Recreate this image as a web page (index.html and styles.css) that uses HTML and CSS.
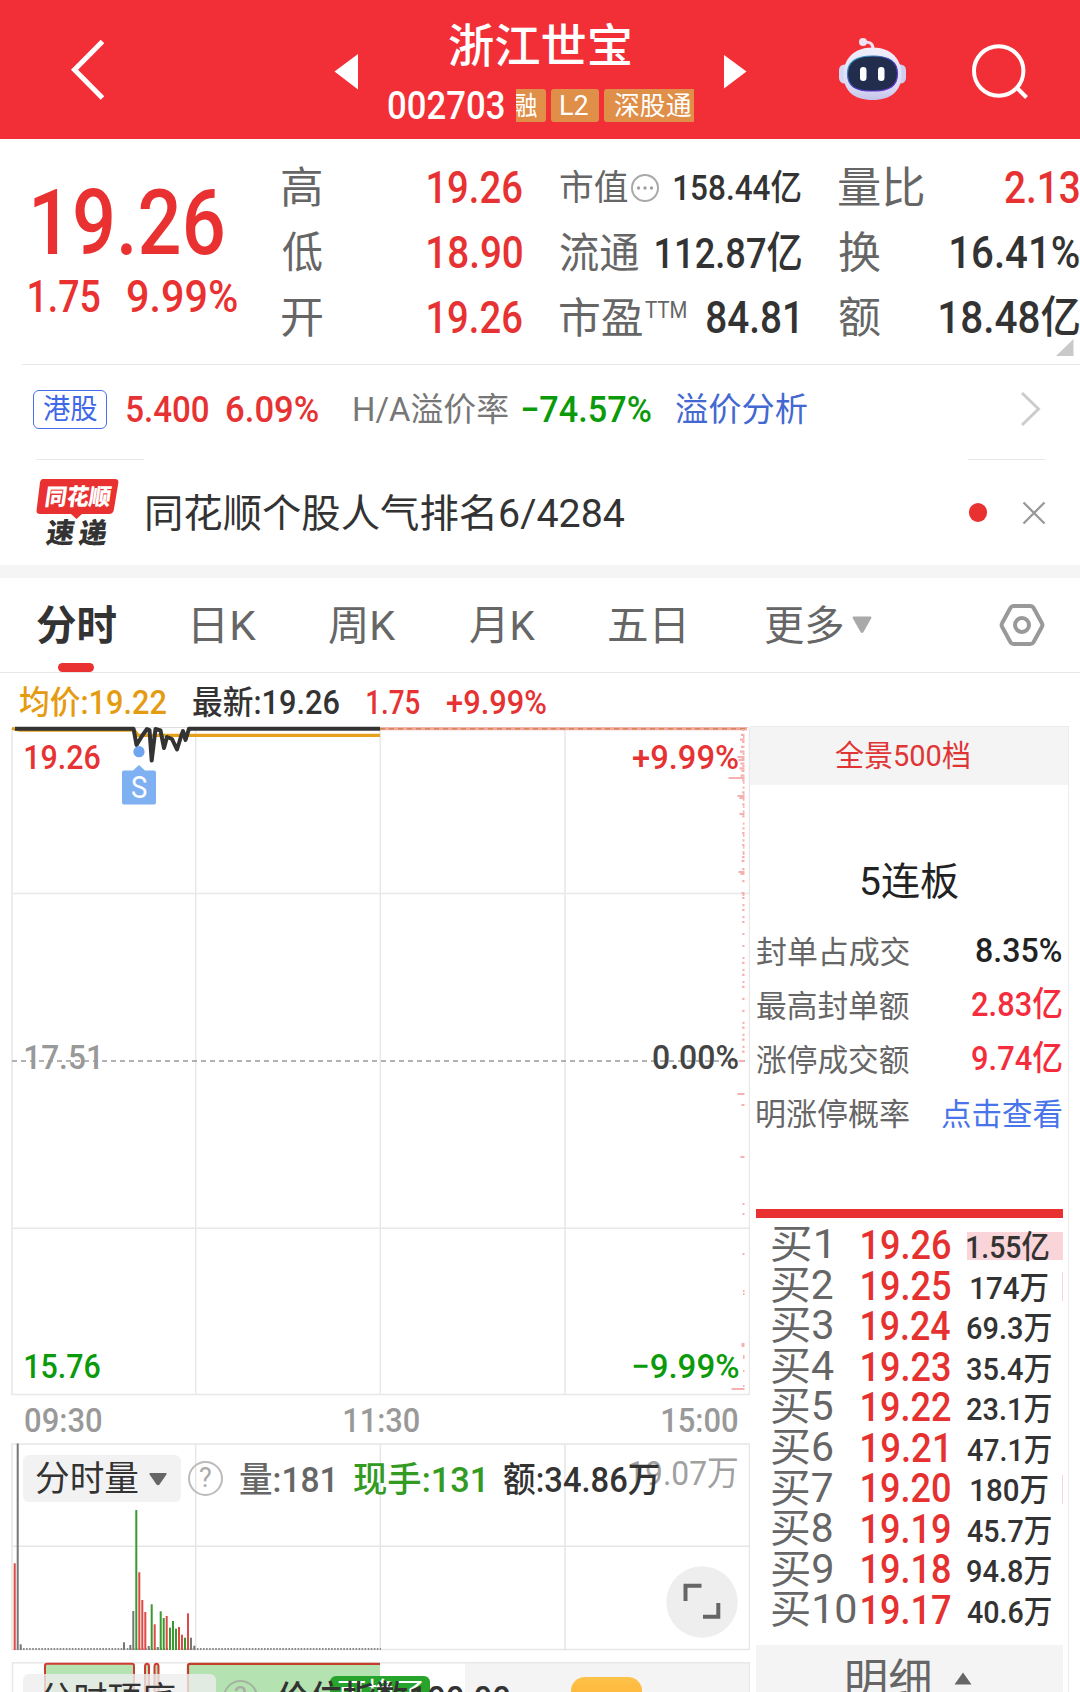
FILE: index.html
```html
<!DOCTYPE html>
<html lang="zh-CN">
<head>
<meta charset="utf-8">
<title>浙江世宝 002703</title>
<link rel="stylesheet" href="styles.css">
</head>
<body>
<header class="top">
  <svg class="top-back" viewBox="0 0 330 139"><path d="M102.500 41.500L74.500 69.700L102.500 98" fill="none" stroke="#fff" stroke-width="5"/></svg>
  <svg class="top-prev" viewBox="330 0 58 139"><path d="M334.500 71.500L358 54V89.500Z" fill="#fff"/></svg>
  <div class="top-mid">
    <div class="top-name"><span data-w="181">浙江世宝</span></div>
    <div class="top-code">
      <span class="code" data-w="115.500">002703</span>
      <i class="badge b-rong"><span>融</span></i>
      <i class="badge b-l2"><span data-w="27.500">L2</span></i>
      <i class="badge b-sgt"><span data-w="77.500">深股通</span></i>
    </div>
  </div>
  <svg class="top-next" viewBox="694 0 126 139"><path d="M746.500 71.500L724 55V88.500Z" fill="#fff"/></svg>
  <svg class="top-robot" viewBox="820 0 130 139">
    <defs>
      <linearGradient id="shell" x1="0" y1="0" x2="0" y2="1"><stop offset="0" stop-color="#f1eefb"/><stop offset=".75" stop-color="#dcdaf4"/><stop offset="1" stop-color="#c3c3ea"/></linearGradient>
      <linearGradient id="rim" x1="0" y1="0" x2="1" y2="1"><stop offset="0" stop-color="#35b7c4"/><stop offset=".5" stop-color="#3c3fc0"/><stop offset="1" stop-color="#7a35d8"/></linearGradient>
    </defs>
    <path d="M863.500 42Q873 41 873 49" fill="none" stroke="#ecdff0" stroke-width="3"/>
    <circle cx="863" cy="42" r="4" fill="#efe4f3"/>
    <rect x="839" y="64.500" width="12" height="19" rx="5.500" fill="#d6d7f5"/>
    <rect x="894" y="64.500" width="12" height="19" rx="5.500" fill="#cfcff2"/>
    <path d="M872.500 47.500C892 47.500 901.500 60 901.500 74.500C901.500 91 891 100 872.500 100C854 100 843.500 91 843.500 74.500C843.500 60 853 47.500 872.500 47.500Z" fill="url(#shell)"/>
    <path d="M872.500 56C889 56 897.500 62 897.500 73.500C897.500 86 890 91 872.500 91C855 91 847.500 86 847.500 73.500C847.500 62 856 56 872.500 56Z" fill="#222c4d" stroke="url(#rim)" stroke-width="1.200"/>
    <rect x="860" y="67" width="6.500" height="14" rx="3.200" fill="#fff"/>
    <rect x="878" y="67" width="6.500" height="14" rx="3.200" fill="#fff"/>
  </svg>
  <svg class="top-search" viewBox="950 0 130 139"><g fill="none" stroke="#fff" stroke-width="4"><circle cx="998.700" cy="71" r="24.700"/><path d="M1016 87L1026.500 97.500"/></g></svg>
</header>

<section class="quote">
  <div class="q-price">
    <div class="q-last"><span data-w="189">19.26</span></div>
    <div class="q-chg"><span data-w="71">1.75</span><span data-w="109">9.99%</span></div>
  </div>
  <div class="q-col q-a">
    <div><em data-w="39.500">高</em><b class="up" data-w="94">19.26</b></div>
    <div><em data-w="40">低</em><b class="up" data-w="94">18.90</b></div>
    <div><em data-w="40">开</em><b class="up" data-w="94">19.26</b></div>
  </div>
  <div class="q-col q-b">
    <div><em class="s35" data-w="67.500">市值</em><svg class="dots" viewBox="0 0 30 30"><circle cx="15" cy="15" r="13" fill="none" stroke="#a9a9a9" stroke-width="2"/><g fill="#a0a0a0"><circle cx="8.500" cy="15" r="1.700"/><circle cx="15" cy="15" r="1.700"/><circle cx="21.500" cy="15" r="1.700"/></g></svg><b class="s35" data-w="127">158.44亿</b></div>
    <div><em class="s41" data-w="79">流通</em><b class="s42" data-w="145">112.87亿</b></div>
    <div><em class="s41" data-w="82">市盈</em><sup data-w="41.500">TTM</sup><b class="pe" data-w="90">84.81</b></div>
  </div>
  <div class="q-col q-c">
    <div><em data-w="84.500">量比</em><b class="up" data-w="74">2.13</b></div>
    <div><em data-w="41">换</em><b data-w="128">16.41%</b></div>
    <div><em data-w="41">额</em><b data-w="139">18.48亿</b></div>
  </div>
  <svg class="q-more" viewBox="0 0 18 18"><path d="M0 17L17.500 0V17Z" fill="#c9c9c9"/></svg>
</section>

<section class="hk">
  <span class="hk-tag"><span data-w="54.500">港股</span></span>
  <b class="up hk-p" data-w="81">5.400</b>
  <b class="up hk-r" data-w="91.500">6.09%</b>
  <em class="hk-l" data-w="154">H/A溢价率</em>
  <b class="down hk-v" data-w="129">−74.57%</b>
  <em class="hk-link" data-w="131">溢价分析</em>
  <svg class="hk-go" viewBox="0 0 22 36"><path d="M2 2L18.500 18L2 34" fill="none" stroke="#ccc" stroke-width="3"/></svg>
</section>
<div class="hair"><i></i><i></i></div>

<section class="news">
  <svg class="news-logo" viewBox="0 0 84 70">
    <path d="M7 1H79Q83 1 82.300 5L77.800 32Q77 36 73 36H46L40.500 41L35 36H4Q0 36 .6 32L4 4.500Q4.600 1 7 1Z" fill="#e93131"/>
    <g transform="skewX(-8)" font-family="'Noto Sans CJK SC',sans-serif" font-weight="900"><text x="12" y="27.500" font-size="23" fill="#fff" textLength="66" lengthAdjust="spacingAndGlyphs">同花顺</text><text x="18.500" y="65" font-size="28" fill="#333" textLength="28" lengthAdjust="spacingAndGlyphs">速</text><text x="51" y="65" font-size="28" fill="#333" textLength="28" lengthAdjust="spacingAndGlyphs">递</text></g>
  </svg>
  <span class="news-t" data-w="478">同花顺个股人气排名6/4284</span>
  <i class="news-dot"></i>
  <svg class="news-x" viewBox="0 0 24 24"><path d="M1.500 1.500L22.500 22.500M22.500 1.500L1.500 22.500" stroke="#999" stroke-width="2.300"/></svg>
</section>

<nav class="tabs">
  <span class="tab on"><span data-w="79">分时</span></span>
  <span class="tab t2" data-w="62">日K</span>
  <span class="tab t3" data-w="66.500">周K</span>
  <span class="tab t4" data-w="65">月K</span>
  <span class="tab t5" data-w="75">五日</span>
  <span class="tab t6" data-w="77.500">更多</span>
  <svg class="tab-tri" viewBox="0 0 20 18"><path d="M1.500 .5H18.500Q20 .5 19.200 2.200L11.500 16Q10 18 8.500 16L.8 2.200Q0 .5 1.500 .5Z" fill="#a9a9a9"/></svg>
  <svg class="tab-set" viewBox="0 0 46 44"><path d="M14.500 3H31.500Q33.500 3 34.500 4.700L42.800 20Q44 22 42.800 24L34.500 39.300Q33.500 41 31.500 41H14.500Q12.500 41 11.500 39.300L3.200 24Q2 22 3.200 20L11.500 4.700Q12.500 3 14.500 3Z" fill="none" stroke="#999" stroke-width="4"/><circle cx="23" cy="22" r="7" fill="none" stroke="#999" stroke-width="4"/></svg>
</nav>

<div class="info">
  <span class="avg" data-w="146.500">均价:19.22</span>
  <span class="now" data-w="146.500">最新:19.26</span>
  <b class="up" data-w="53">1.75</b>
  <b class="up" data-w="99">+9.99%</b>
</div>

<main class="main">
  <div class="charts">
    <div class="price">
      <svg viewBox="0 726 750 670">
        <g fill="none" stroke="#e8e8e8" stroke-width="1.500">
          <path d="M12 728V1394.500H749.500V728"/>
          <path d="M195.700 728V1394M380.300 728V1394M565 728V1394M12 893.500H749M12 1228.300H749"/>
        </g>
        <path d="M12 727.500H749" stroke="#ddd" stroke-width="1"/>
        <path d="M12 1061H745" stroke="#999" stroke-width="1.500" stroke-dasharray="5 4"/>
        <path d="M380 728.700H747" stroke="#f6a59c" stroke-width="3"/>
        <path d="M380 728.700H747" stroke="#c98a55" stroke-width="1.500" stroke-dasharray="5 4"/>
        <path d="M12 728.500L20 730H134L138 735.300H380" fill="none" stroke="#e5a01c" stroke-width="3.300"/>
        <path id="ticks" fill="none" stroke="#f7b0b0" stroke-width="2.200"/>
        <path d="M15 728.700H133.500L136.500 745L142 736L147 729L149.500 730L151.700 760.500L155.500 729L160.500 730.500L164 748L167 737L172 739L177 749.500L181.500 735L183 731L185.500 740L189 728.700H380" fill="none" stroke="#333" stroke-width="4" stroke-linejoin="round"/>
        <circle cx="139" cy="751.700" r="5.600" fill="#6ea5ee"/>
        <path d="M124 770.500H133L139 765L145 770.500H154Q156 770.500 156 772.500V802.500Q156 804.500 154 804.500H124Q122 804.500 122 802.500V772.500Q122 770.500 124 770.500Z" fill="#7fb0f1"/>
      </svg>
      <b class="ov up o-hi" data-w="74.500">19.26</b>
      <b class="ov up o-hip" data-w="105">+9.99%</b>
      <b class="ov gray o-mid" data-w="73">17.51</b>
      <b class="ov dark o-midp" data-w="85">0.00%</b>
      <b class="ov down o-lo" data-w="74.500">15.76</b>
      <b class="ov down o-lop" data-w="105.500">−9.99%</b>
      <span class="ov o-s" data-w="15">S</span>
    </div>
    <div class="axis"><b data-w="76.500">09:30</b><b data-w="75">11:30</b><b data-w="75.500">15:00</b></div>
    <div class="vol">
      <svg viewBox="0 1443 750 208">
        <path d="M12 1444H749.500V1649.500H12ZM195.700 1444V1649M380.300 1444V1649M565 1444V1649M12 1546.300H749" fill="none" stroke="#e6e6e6" stroke-width="1.500"/>
        <path d="M20 1649H381" stroke="#888" stroke-width="1.800" stroke-dasharray="1.600 1.450"/>
        <g id="bars"></g>
      </svg>
      <div class="ov v-sel"><span data-w="102">分时量</span><svg viewBox="0 0 18 13"><path d="M1 0H17Q18 .4 17.400 1.600L10.500 11.500Q9 13 7.500 11.500L.6 1.600Q0 .4 1 0Z" fill="#666"/></svg></div>
      <i class="ov v-q"><span>?</span></i>
      <b class="ov v-max" data-w="108">19.07万</b>
      <b class="ov v-a" data-w="93">量:181</b>
      <b class="ov v-b" data-w="129.500">现手:131</b>
      <b class="ov v-c" data-w="154.500">额:34.86万</b>
      <svg class="ov v-full" viewBox="0 0 72 72"><circle cx="36" cy="36" r="35.700" fill="#eee"/><path d="M19.500 35V19.700H35.500M37 50.800H52.300V37" fill="none" stroke="#666" stroke-width="4"/></svg>
    </div>
    <div class="sub">
      <svg viewBox="0 1662 750 30">
        <rect x="465" y="1663" width="285" height="29" fill="#f4f4f4"/>
        <path d="M12.500 1692V1662.700H749.500V1692" fill="none" stroke="#e8e8e8" stroke-width="1.500"/>
        <path d="M188.500 1692V1665H380V1692Z" fill="#b4e2b0"/>
        <g fill="#b4e2b0" stroke="#d03a30" stroke-width="2"><path d="M45 1693V1666Q45 1663.800 47 1663.800H132Q134 1663.800 134 1666V1693Z"/><path d="M145 1693V1667Q145 1663.800 147 1663.800T149 1667V1693ZM154.500 1693V1667Q154.500 1663.800 156.500 1663.800T158.500 1667V1693Z"/></g>
        <path d="M188 1693V1666Q188 1663.800 190 1663.800H380" fill="none" stroke="#c33f2c" stroke-width="2.200"/>
      </svg>
      <div class="ov s-sel"><span data-w="135">分时顶底</span></div>
      <i class="ov s-q"><span>?</span></i>
      <div class="ov s-tag"><span data-w="84">可换了</span></div>
      <b class="ov s-v" data-w="232">价位指数100.00</b>
      <i class="ov s-btn"></i>
    </div>
  </div>

  <aside class="side">
    <div class="side-h"><span data-w="134">全景500档</span></div>
    <div class="side-t"><span data-w="97.500">5连板</span></div>
    <div class="stat"><em data-w="152.500">封单占成交</em><b class="ink" data-w="85.500">8.35%</b></div>
    <div class="stat"><em data-w="152.500">最高封单额</em><b class="hot" data-w="90">2.83亿</b></div>
    <div class="stat"><em data-w="152.500">涨停成交额</em><b class="hot" data-w="90">9.74亿</b></div>
    <div class="stat"><em data-w="152">明涨停概率</em><em class="blue" data-w="120">点击查看</em></div>
    <div class="bar"></div>
    <ol class="bids">
      <li><em data-w="57">买1</em><b data-w="88">19.26</b><span class="v full"><span data-w="82">1.55亿</span></span></li>
      <li><em data-w="60">买2</em><b data-w="88">19.25</b><span class="v tick n3"><span data-w="77">174万</span></span></li>
      <li><em data-w="60">买3</em><b data-w="88">19.24</b><span class="v"><span data-w="84.500">69.3万</span></span></li>
      <li><em data-w="61.500">买4</em><b data-w="88">19.23</b><span class="v"><span data-w="84.500">35.4万</span></span></li>
      <li><em data-w="60">买5</em><b data-w="88">19.22</b><span class="v"><span data-w="84.500">23.1万</span></span></li>
      <li><em data-w="60.500">买6</em><b data-w="84">19.21</b><span class="v"><span data-w="84.500">47.1万</span></span></li>
      <li><em data-w="60">买7</em><b data-w="88">19.20</b><span class="v tick n3"><span data-w="77">180万</span></span></li>
      <li><em data-w="60">买8</em><b data-w="88">19.19</b><span class="v"><span data-w="84.500">45.7万</span></span></li>
      <li><em data-w="60">买9</em><b data-w="88">19.18</b><span class="v"><span data-w="84.500">94.8万</span></span></li>
      <li><em data-w="84">买10</em><b data-w="88">19.17</b><span class="v"><span data-w="84.500">40.6万</span></span></li>
    </ol>
    <div class="detail"><em data-w="82.500">明细</em><svg viewBox="0 0 18 13"><path d="M9 .5L17.500 12.500H.5Z" fill="#666"/></svg></div>
  </aside>
</main>
<script src="app.js"></script>
</body>
</html>
```
FILE: styles.css
```css
* { box-sizing: border-box; }
body { margin: 0; width: 1080px; height: 1692px; overflow: hidden; background: #fff; color: #333; font-family: Roboto, "Noto Sans CJK SC", sans-serif; line-height: 1; }
b { font-weight: 500; }
em, i { font-style: normal; font-weight: 400; }
svg { display: block; flex: none; }
[data-w] { display: block; flex: none; white-space: nowrap; }
[data-w] > u { display: inline-block; text-decoration: none; transform-origin: 0 50%; }
.up { color: #e63232; }
.down { color: #0a9a0a; }
.gray { color: #999; }
.dark { color: #444; }

.top { display: flex; height: 139px; background: #f22f37; color: #fff; }
.top svg { height: 139px; }
.top-back { width: 330px; }
.top-prev { width: 58px; }
.top-next { width: 126px; }
.top-robot, .top-search { width: 130px; }
.top-mid { width: 306px; flex: none; }
.top-name { height: 89px; padding-left: 61px; font-size: 46px; font-weight: 500; line-height: 93px; }
.top-code { display: flex; align-items: center; height: 33px; }
.code { font-size: 39px; font-weight: 500; margin-right: 12px; padding-top: 2px; }
.badge { display: flex; align-items: center; justify-content: center; height: 33px; background: #e08f49; border-radius: 3px; font-size: 26px; margin-right: 5.500px; }
.b-rong { width: 30px; overflow: hidden; justify-content: flex-end; padding-right: 8px; border-radius: 0 3px 3px 0; }
.b-l2 { width: 47.500px; padding-top: 2px; font-size: 27px; }
.b-sgt { width: 89.500px; margin: 0; padding-left: 7px; border-radius: 3px 0 0 3px; }

.quote { position: relative; display: flex; height: 225px; }
.quote em { color: #666; font-size: 43px; padding-top: 2px; }
.quote b { font-size: 44px; padding-top: 1px; }
.quote .s35 { font-size: 35px; }
.quote .s41 { font-size: 41.500px; }
.quote .s42 { font-size: 43px; }
.q-price { width: 282px; padding-top: 48px; color: #e93131; font-weight: 500; }
.q-last { display: flex; align-items: center; height: 73px; padding-left: 34px; font-size: 90px; }
.q-chg { display: flex; align-items: center; gap: 27.500px; height: 74px; padding-left: 29px; font-size: 44px; }
.q-col { padding-top: 16px; }
.q-col > div { display: flex; align-items: center; justify-content: space-between; height: 65px; }
.q-a { width: 240px; }
.q-b { width: 241px; margin-left: 38px; }
.q-c { width: 240px; margin-left: 38px; }
.dots { width: 30px; height: 30px; margin: 0 11px 0 -1px; }
.quote sup { color: #666; font-size: 23px; margin: -15px 15px 0 -3px; }
.pe { margin-right: 4px; }
.q-more { position: absolute; left: 1056px; top: 200px; width: 18px; height: 18px; }

.hk { display: flex; align-items: center; height: 95px; margin-left: 22px; padding: 0 38.500px 6px 11px; border-top: 1.500px solid #e9e9e9; }
.hk b { font-size: 36.500px; padding-top: 1.500px; }
.hk em { font-size: 33px; color: #777; padding-top: 1px; }
.hk-tag { display: flex; align-items: center; justify-content: center; width: 74px; height: 39px; border: 1.700px solid #4670ee; border-radius: 6px; color: #3f68e8; font-size: 28px; padding-top: 2px; }
.hk-p { margin-left: 19.500px; }
.hk-r { margin-left: 19px; }
.hk-l { margin-left: 36px; }
.hk-v { margin-left: 14px; }
.hk .hk-link { margin-left: 24.500px; color: #4468d2; }
.hk-go { width: 22px; height: 36px; margin-left: auto; }

.hair { display: flex; justify-content: space-between; height: 1px; margin: 0 35px 0 36px; }
.hair i { width: 108px; background: #e9e9e9; }
.hair i + i { width: 77px; }

.news { display: flex; align-items: center; height: 105px; padding: 0 34.500px 0 36px; }
.news-logo { width: 84px; height: 70px; }
.news-t { margin-left: 27px; padding-top: 3px; font-size: 39px; }
.news-dot { width: 18.500px; height: 18.500px; margin-left: auto; border-radius: 50%; background: #e93131; }
.news-x { width: 24px; height: 24px; margin-left: 34.500px; }

.tabs { display: flex; align-items: center; height: 108px; padding: 0 35px 0 36.500px; border-top: 13px solid #f5f5f5; border-bottom: 1.500px solid #e6e6e6; font-size: 41px; color: #666; }
.tab { padding-top: 2.500px; }
.on { position: relative; font-weight: 700; color: #333; }
.on::after { content: ""; position: absolute; left: 21px; top: 60px; width: 36px; height: 9px; border-radius: 5px; background: #e93131; }
.t2 { margin-left: 78.500px; }
.t3 { margin-left: 73px; }
.t4 { margin-left: 74.500px; }
.t5 { margin-left: 73.500px; }
.t6 { margin-left: 81px; }
.tab-tri { width: 20px; height: 18px; margin-left: 10px; }
.tab-set { width: 46px; height: 44px; margin-left: auto; }

.info { display: flex; align-items: center; height: 53px; padding: 7px 0 0 19.500px; font-size: 32.500px; }
.avg { color: #e59b10; font-weight: 500; margin-right: 26.500px; }
.now { margin-right: 28px; font-weight: 500; }
.info b { margin-right: 26.500px; }

.main { display: flex; height: 966px; overflow: hidden; }
.charts { width: 750px; flex: none; }
.ov { position: absolute; }
.price, .vol, .sub { position: relative; }
.price { height: 670px; font-size: 34px; }
.price > svg { width: 750px; height: 670px; }
.o-hi { left: 25px; top: 14px; }
.o-hip { left: 632.500px; top: 14px; }
.o-mid { left: 25px; top: 314px; }
.o-midp { left: 652.500px; top: 314px; }
.o-lo { left: 25px; top: 623px; }
.o-lop { left: 632.500px; top: 623px; }
.o-s { left: 131.500px; top: 46px; font-size: 31px; color: #fff; }
.axis { display: flex; align-items: center; justify-content: space-between; height: 47px; padding: 0 13px 0 25px; font-size: 34px; color: #999; }

.vol { height: 208px; font-size: 35px; }
.vol > svg:first-child { width: 750px; height: 208px; }
.v-sel { display: flex; align-items: center; left: 23px; top: 12px; width: 158px; height: 46.500px; padding: 2px 0 0 13px; border-radius: 6px; background: #f2f2f2; }
.v-sel svg { width: 18px; height: 13px; margin-left: 11px; }
.v-q, .s-q { display: flex; align-items: center; justify-content: center; width: 35px; height: 35px; border: 2.300px solid #bbb; border-radius: 50%; color: #aaa; font-size: 27px; }
.v-q { left: 188px; top: 18px; }
.v-max { left: 629px; top: 13px; color: #a0a0a0; font-size: 34px; font-weight: 400; }
.v-a { left: 239.500px; top: 19.500px; color: #666; }
.v-b { left: 354px; top: 19.500px; color: #339a22; }
.v-c { left: 504px; top: 19.500px; color: #333; }
.v-full { left: 666px; top: 123px; width: 72px; height: 72px; }

.sub { height: 30px; margin-top: 11px; overflow: hidden; font-size: 35px; }
.sub > svg { width: 750px; height: 30px; }
.s-sel { left: 23px; top: 12px; width: 193px; height: 48px; padding: 9px 0 0 17px; border-radius: 6px; background: rgba(238, 238, 238, .8); }
.s-q { left: 223px; top: 18px; border-color: rgba(150, 150, 150, .6); }
.s-tag { left: 330px; top: 14px; width: 100px; height: 44px; padding: 4px 0 0 8px; border-radius: 6px; background: #27a42b; color: #fff; font-size: 28px; }
.s-v { left: 278px; top: 20px; }
.s-btn { left: 571px; top: 15px; width: 71px; height: 40px; border-radius: 14px; background: linear-gradient(#fec24a, #fbac28); }

.side { width: 318.500px; border-right: 1.500px solid #ececec; }
.side-h { height: 59px; padding: 13.500px 0 0 85px; background: #f4f4f4; color: #e03535; font-size: 30px; border-top: 1px solid #ececec; }
.side-t { height: 140px; padding: 77.500px 0 0 110.500px; font-size: 38.500px; color: #222; }
.stat { display: flex; align-items: center; justify-content: space-between; height: 54px; padding: 0 6px 0 7px; font-size: 31px; color: #666; }
.stat em { padding-top: 1px; }
.stat b { font-size: 34px; margin-top: -4px; }
.ink { color: #222; }
.hot { color: #f52c3c; }
.blue { color: #4a74ea; }
.bar { height: 8.500px; margin: 68px 5px 5px 6px; background: #e93131; }
.bids { margin: 0; padding: 0; list-style: none; }
.bids li { display: grid; grid-template-columns: 90px 105px 1fr; align-items: center; height: 40.550px; padding: 0 5px 0 22px; }
.bids em { font-size: 40px; color: #666; padding-top: 2.500px; }
.bids b { font-size: 41.500px; color: #e63131; padding-top: 1.500px; }
.v { display: flex; align-items: center; justify-content: flex-end; height: 28.500px; padding: 2px 13.500px 0 0; margin-top: 4px; font-size: 32px; font-weight: 500; }
.n3 { padding-right: 14px; }
.full { background: #f9d4d8; }
.tick { border-right: 1.500px solid #f9d4d8; }
.detail { display: flex; align-items: center; height: 68px; margin: 17px 5px 0 6px; padding-left: 91px; background: #f4f4f4; color: #666; font-size: 44px; }
.detail em { padding-top: 5px; }
.detail svg { width: 18px; height: 13px; margin-left: 24px; }
```
FILE: app.js
```js
// Squeeze each label to its column: data-w is the drawn width in px.
const ctx = document.createElement('canvas').getContext('2d');
document.querySelectorAll('[data-w]').forEach(el => {
  const cs = getComputedStyle(el), text = el.textContent, w = +el.dataset.w;
  ctx.font = `${cs.fontWeight} ${cs.fontSize} ${cs.fontFamily}`;
  const m = ctx.measureText(text);
  const k = w / (m.actualBoundingBoxLeft + m.actualBoundingBoxRight);
  const u = document.createElement('u');
  u.textContent = text;
  u.style.transform = `scaleX(${k}) translateX(${m.actualBoundingBoxLeft}px)`;
  el.replaceChildren(u);
  el.style.width = w + 'px';
});

// Minute volume: [x, top, colour]
const R = '#dd4a46', G = '#3a9a30', K = '#777';
const bars = [[14.7,1563.3,R],[17.7,1443.5,K],[20.7,1644.3,K],[124,1642.3,K],[130.3,1645,K],[133.3,1611,K],[136.3,1510,G],[139.3,1572.3,R],[142.3,1600,R],[145.3,1612,R],[148.7,1646,K],[151.7,1604.3,G],[154.7,1624.3,R],[157.7,1647,K],[160.7,1611.3,G],[163.7,1618,G],[166.7,1616,R],[170,1627.7,G],[173,1621,G],[176,1628.7,G],[179,1627,R],[182,1634.7,R],[185,1637.7,G],[188,1613.3,R],[191,1637.7,K],[194.3,1645.7,K]];
document.getElementById('bars').innerHTML = bars.map(([x, y, c]) =>
  `<rect x="${x - 1}" y="${y}" width="2" height="${1650 - y}" fill="${c}"/>`).join('');

// Price distribution along the right edge: [y, length]
const t = [[757,7],[760,6],[778,16],[796,7],[798,5],[814,5],[872,6],[874,4],[1061,6],[1094,7],[1105,3],[1157,4],[1204,2],[1214,2],[1254,2],[1291,1.5],[1294,1.5],[1344,3],[1346,3],[1356,1.5],[1358,1.5],[1371,1.5],[1389,13],[1386,1.5],[861,3],[854,1.5],[893,3],[895,2]];
for (let y = 730; y < 1060; y += 2.4) {
  const n = Math.round(y * 7.3) % 11;
  const dense = y < 780 ? 3 : y < 850 ? 5 : 8;
  if (n >= dense) t.push([y, y < 780 ? n / 2 : n / 5 + .4]);
}
document.getElementById('ticks').setAttribute('d', t.map(([y, l]) => `M${744.5 - l} ${y}h${l}`).join(''));
```
